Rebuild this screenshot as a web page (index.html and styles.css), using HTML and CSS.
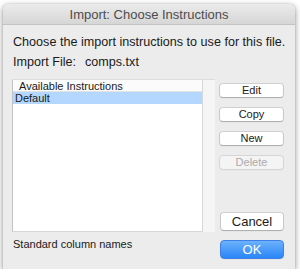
FILE: index.html
```html
<!DOCTYPE html>
<html>
<head>
<meta charset="utf-8">
<link rel="stylesheet" href="styles.css">
</head>
<body>
<div class="window">
  <div class="titlebar">Import: Choose Instructions</div>
  <div class="content">
    <p class="prompt">Choose the import instructions to use for this file.</p>
    <p class="file"><span class="file-label">Import File:</span><span class="file-name">comps.txt</span></p>
    <div class="main">
      <div class="list">
        <div class="list-table">
          <div class="list-header">Available Instructions</div>
          <div class="list-row selected">Default</div>
        </div>
        <div class="list-side"></div>
      </div>
      <div class="buttons">
        <button class="btn">Edit</button>
        <button class="btn">Copy</button>
        <button class="btn">New</button>
        <button class="btn disabled">Delete</button>
        <div class="spacer"></div>
        <button class="btn big">Cancel</button>
      </div>
    </div>
    <div class="footer">
      <span class="note">Standard column names</span>
      <button class="btn big primary">OK</button>
    </div>
  </div>
</div>
</body>
</html>
```

FILE: styles.css
```css
html, body {
  margin: 0;
  padding: 0;
  background: #ffffff;
}
body {
  padding: 4px 5px 0 3px;
  font-family: "Liberation Sans", Arial, sans-serif;
  color: #1a1a1a;
}
.window {
  width: 292px;
  height: 265px;
  background: #ececec;
  border-radius: 5px 5px 0 0;
  box-shadow: 0 2px 6px rgba(0,0,0,0.45), 0 0 1px rgba(0,0,0,0.3);
  display: flex;
  flex-direction: column;
  overflow: hidden;
}
.titlebar {
  height: 20px;
  line-height: 21px;
  text-align: center;
  font-size: 13px;
  color: #4c4c4c;
  background: linear-gradient(#ebebeb, #d6d6d6);
  border-bottom: 1px solid #c4c4c4;
  box-sizing: content-box;
}
.content {
  flex: 1;
  display: flex;
  flex-direction: column;
  padding: 0 11px 0 9px;
}
.prompt {
  margin: 10px 0 0 1px;
  font-size: 12.6px;
  line-height: 15px;
  height: 15px;
  white-space: nowrap;
}
.file {
  margin: 5px 0 0 1px;
  font-size: 12.6px;
  line-height: 15px;
  height: 15px;
  white-space: nowrap;
}
.file-label {
  display: inline-block;
  width: 72px;
}
.main {
  margin-top: 9px;
  display: flex;
  height: 153px;
}
.list {
  width: 203px;
  display: flex;
  border-top: 1px solid #dcdcdc;
}
.list-table {
  flex: 1;
  background: #ffffff;
  border-left: 1px solid #c2c2c2;
  border-bottom: 1px solid #d6d6d6;
  border-right: 1px solid #d8d8d8;
}
.list-header {
  height: 11px;
  line-height: 12px;
  font-size: 11px;
  padding-left: 6px;
  border-bottom: 1px solid #e2e2e2;
  background: #fbfbfb;
}
.list-row {
  height: 12px;
  line-height: 12px;
  font-size: 11px;
  padding-left: 2px;
}
.list-row.selected {
  background: #b3d7ff;
}
.list-side {
  width: 12px;
  background: #f5f5f5;
}
.buttons {
  margin-left: 4px;
  padding-top: 4px;
  width: 65px;
  display: flex;
  flex-direction: column;
  gap: 9px;
}
.spacer {
  flex: 1;
}
.btn {
  font-family: "Liberation Sans", Arial, sans-serif;
  height: 15px;
  width: 65px;
  padding: 0;
  font-size: 11px;
  line-height: 13px;
  color: #1a1a1a;
  background: #ffffff;
  border: 1px solid #c8c8c8;
  border-top-color: #d0d0d0;
  border-bottom-color: #b0b0b0;
  border-radius: 4px;
  box-shadow: 0 0.5px 0 rgba(0,0,0,0.05);
}
.btn.disabled {
  color: #aaaaaa;
  background: #f4f4f4;
  border-color: #d6d6d6;
}
.btn.big {
  height: 19px;
  font-size: 13px;
  line-height: 17px;
  width: 64px;
  margin-left: 1px;
}
.buttons .btn.big {
  margin-bottom: 1px;
}
.footer {
  margin-top: 2px;
  display: flex;
  justify-content: space-between;
  align-items: flex-start;
}
.note {
  margin-top: 4px;
  margin-left: 1px;
  font-size: 11px;
  line-height: 13px;
}
.btn.primary {
  margin-top: 6px;
  margin-right: 0;
  color: #ffffff;
  border: 1px solid #3d7fe6;
  background: linear-gradient(#6cb1fb, #2a86f8);
}
```
